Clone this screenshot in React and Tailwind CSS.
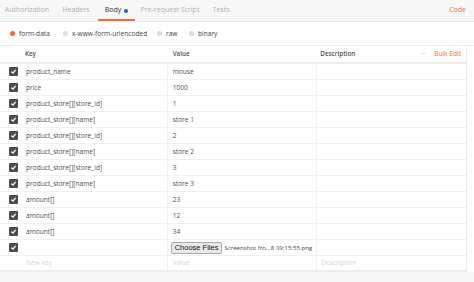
import React from "react";

const tabs = [
    { label: "Authorization", w: "w-[54px]" },
    { label: "Headers", w: "w-[44px]" },
    { label: "Body", w: "w-[37px]", active: true },
    { label: "Pre-request Script", w: "w-[70px]" },
    { label: "Tests", w: "w-[32px]" },
];

const modes = [
    { label: "form-data", w: "w-[53px]", active: true },
    { label: "x-www-form-urlencoded", w: "w-[94px]" },
    { label: "raw", w: "w-[32px]" },
    { label: "binary", w: "w-[40px]" },
];

const rows = [
    ["product_name", "mouse"],
    ["price", "1000"],
    ["product_store[][store_id]", "1"],
    ["product_store[][name]", "store 1"],
    ["product_store[][store_id]", "2"],
    ["product_store[][name]", "store 2"],
    ["product_store[][store_id]", "3"],
    ["product_store[][name]", "store 3"],
    ["amount[]", "23"],
    ["amount[]", "12"],
    ["amount[]", "34"],
];

const Check = () => (
    <span className="w-[9px] h-[9px] rounded-[1px] bg-[#4d4d4d] flex items-center justify-center">
        <svg width="7" height="7" viewBox="0 0 10 10">
            <path d="M2 5.2 L4.2 7.3 L8 2.8" fill="none" stroke="white" strokeWidth="1.8" />
        </svg>
    </span>
);

const Row = ({ k, v, file }) => (
    <div className="flex h-4 border-b border-[#f0f0f0]">
        <div className="w-[20px] flex items-center justify-center pl-[8px]">
            <Check />
        </div>
        <div className="w-[148px] flex items-center pl-[6px] border-r border-[#f0f0f0] text-[#505050]">{k}</div>
        <div className="w-[150px] flex items-center pl-[3px] border-r border-[#f0f0f0] text-[#505050] whitespace-nowrap overflow-hidden">
            {file ? (
                <>
                    <span className="px-[3px] h-[12px] flex items-center bg-[#e9e9e9] border border-[#a9a9a9] rounded-[2px] text-[#111] font-['Liberation_Sans',sans-serif] text-[7.5px]">Choose Files</span>
                    <span className="ml-[2px] text-[#444] text-[6.1px]">Screenshot fro...8 09:15:55.png</span>
                </>
            ) : (
                <span className="pl-[2px]">{v}</span>
            )}
        </div>
        <div className="w-[149px]"></div>
    </div>
);

export default function App() {
    return (
        <div className="w-[474px] h-[282px] bg-white overflow-hidden font-['Open_Sans',sans-serif] text-[6.6px]">
            <div className="h-[22px] bg-[#f7f7f7] border-b border-[#e8e8e8] flex items-stretch pr-[8px] text-[7px]">
                {tabs.map((t) => (
                    <div
                        key={t.label}
                        className={
                            t.active
                                ? `${t.w} flex items-center justify-center gap-[3px] text-[#333] border-b-2 border-[#f26b3a] pt-[2px]`
                                : `${t.w} flex items-center justify-center text-[#b0b0b0] whitespace-nowrap`
                        }
                    >
                        {t.label}
                        {t.active && <span className="w-[4px] h-[4px] rounded-full bg-[#1a62d6]"></span>}
                    </div>
                ))}
                <div className="ml-auto flex items-center text-[#f26b3a]">Code</div>
            </div>
            <div className="h-[24px] flex items-center pl-[10px] border-b border-[#ececec] text-[6.6px]">
                {modes.map((m) => (
                    <div key={m.label} className={`${m.w} flex items-center gap-[4px] text-[#444] whitespace-nowrap`}>
                        <span className={m.active ? "w-[5px] h-[5px] rounded-full bg-[#f26b3a]" : "w-[5px] h-[5px] rounded-full bg-[#dcdcdc]"}></span>
                        {m.label}
                    </div>
                ))}
            </div>
            <div className="w-[467px] border-r border-[#ececec]">
                <div className="flex h-[18px] border-b-2 border-[#ececec] font-semibold text-[#505050] text-[6.3px]">
                    <div className="w-[20px]"></div>
                    <div className="w-[148px] flex items-center pl-[5px]">Key</div>
                    <div className="w-[150px] flex items-center pl-[5px]">Value</div>
                    <div className="w-[149px] flex items-center pl-[3px] pr-[5px]">
                        Description
                        <span className="ml-auto text-[#999] font-normal">···</span>
                        <span className="ml-[9px] text-[#f26b3a] font-normal text-[6.6px]">Bulk Edit</span>
                    </div>
                </div>
                {rows.map(([k, v], i) => (
                    <Row key={i} k={k} v={v} />
                ))}
                <Row k="" file />
                <div className="flex h-4 border-b-2 border-[#ececec] text-[#d4d4d4]">
                    <div className="w-[20px]"></div>
                    <div className="w-[148px] flex items-center pl-[6px] border-r border-[#f0f0f0]">New key</div>
                    <div className="w-[150px] flex items-center pl-[5px] border-r border-[#f0f0f0]">Value</div>
                    <div className="w-[149px] flex items-center pl-[4px]">Description</div>
                </div>
            </div>
            <div className="h-[12px] bg-[#f7f7f7]"></div>
        </div>
    );
}
